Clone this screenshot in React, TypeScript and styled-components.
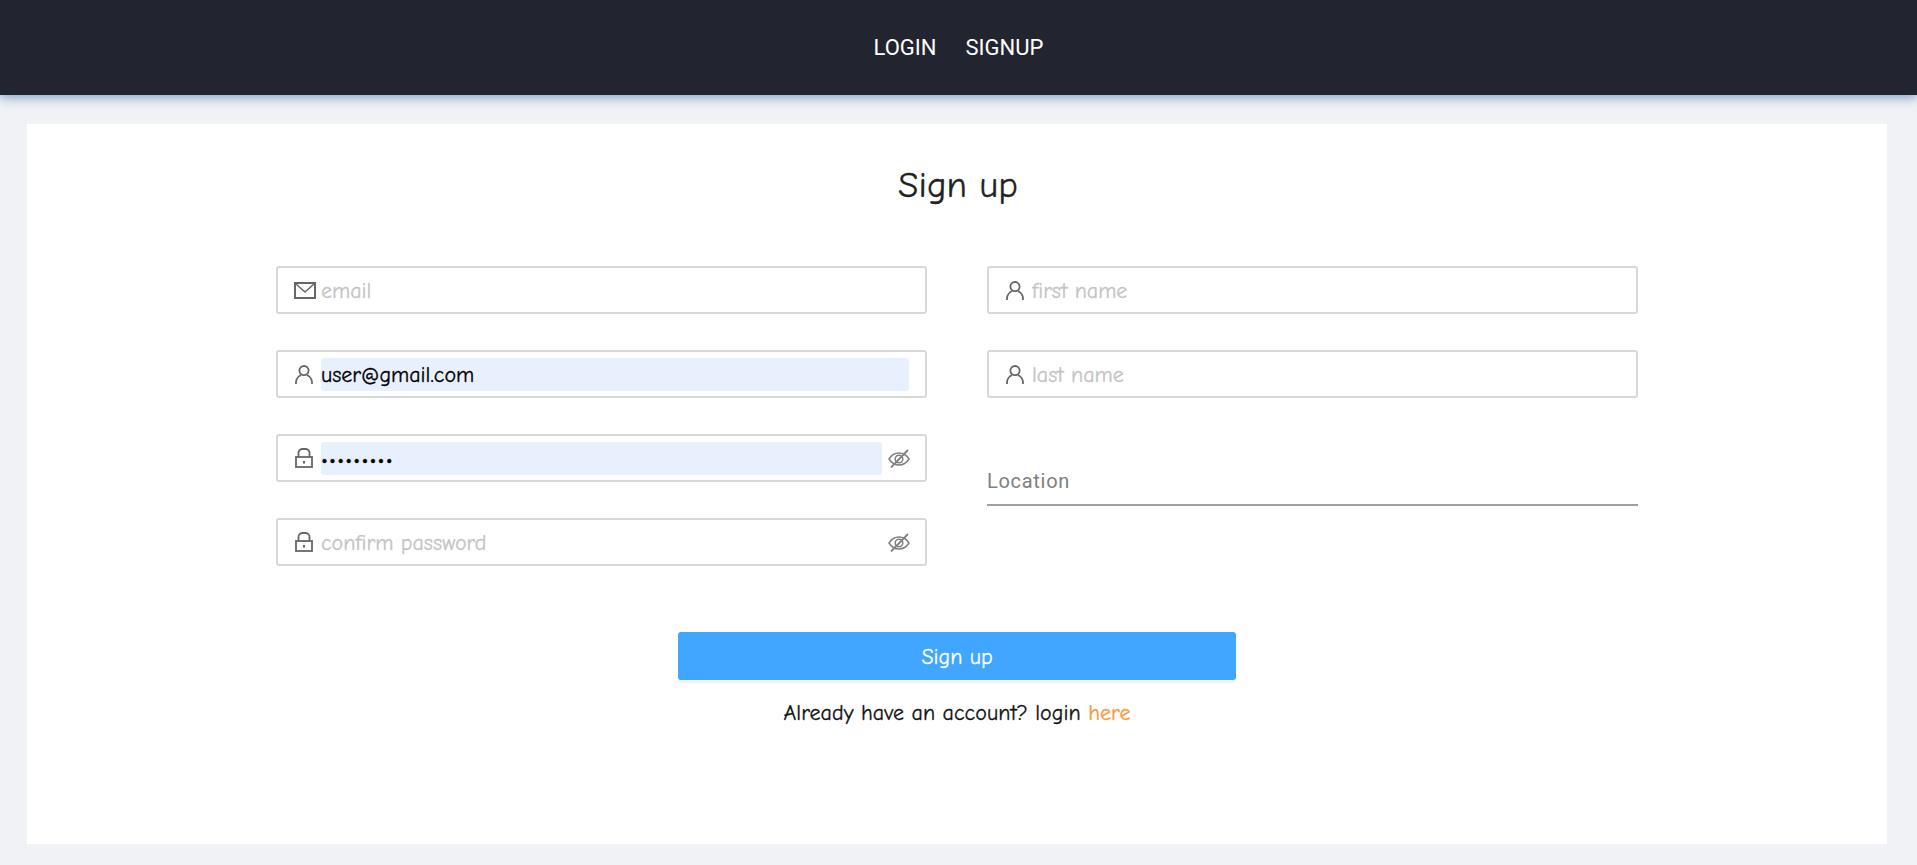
import styled, { createGlobalStyle } from "styled-components";

const comic = `"Comic Sans MS", "Comic Neue", cursive`;

const GlobalStyle = createGlobalStyle`
  * {
    box-sizing: border-box;
  }
  html, body {
    margin: 0;
    padding: 0;
    background: #f0f2f6;
    font-family: ${comic};
    -webkit-text-stroke: 0.3px;
  }
`;

const Page = styled.div`
  height: 865px;
  overflow: hidden;
  display: flex;
  flex-direction: column;
`;

const Header = styled.header`
  height: 95px;
  flex: none;
  background: #222530;
  box-shadow: 0 3px 10px rgba(90, 130, 175, 0.7);
  display: flex;
  justify-content: center;
  align-items: center;
  gap: 29px;
`;

const NavLink = styled.a`
  font-family: Roboto, sans-serif;
  font-size: 22px;
  color: #fff;
  text-transform: uppercase;
  -webkit-text-stroke: 0;
  cursor: pointer;
`;

const Card = styled.main`
  margin: 29px 30px 0 27px;
  height: 720px;
  background: #fff;
  display: flex;
  flex-direction: column;
  align-items: center;
  padding-top: 36px;
`;

const Title = styled.h1`
  margin: 0 0 0 2px;
  font-size: 37px;
  font-weight: 400;
  line-height: 50px;
  color: #222;
`;

const Form = styled.form`
  width: 1362px;
  margin-top: 56px;
  display: flex;
  flex-direction: column;
  align-items: center;
`;

const Columns = styled.div`
  width: 100%;
  display: grid;
  grid-template-columns: 651px 651px;
  column-gap: 60px;
`;

const Column = styled.div`
  display: flex;
  flex-direction: column;
  gap: 36px;
`;

const Field = styled.label`
  height: 48px;
  border: 2px solid #d8d8d8;
  border-radius: 3px;
  background: #fff;
  display: flex;
  align-items: center;
  padding: 0 16px;
`;

const IconSlot = styled.span<{ $inset?: number }>`
  width: 27px;
  flex: none;
  display: flex;
  align-items: center;
  padding-left: ${(p) => p.$inset ?? 0}px;
  color: #666;
  svg {
    display: block;
  }
`;

const Input = styled.input<{ $filled?: boolean; $dots?: boolean }>`
  flex: 1;
  min-width: 0;
  height: 33px;
  border: none;
  outline: none;
  padding: 2px 0 0;
  border-radius: 3px;
  font-family: ${comic};
  font-size: 22px;
  letter-spacing: ${(p) => (p.$dots ? "1.2px" : "normal")};
  color: #000;
  background: ${(p) => (p.$filled ? "#e8f0fe" : "transparent")};
  &::placeholder {
    color: #c4c4c4;
    opacity: 1;
  }
`;

const EyeSlot = styled.span`
  flex: none;
  width: 28px;
  margin-right: -1px;
  display: flex;
  justify-content: flex-end;
  color: #808080;
`;

const LocationField = styled.div`
  height: 50px;
  margin-top: 22px;
  border-bottom: 2px solid #a0a0a0;
`;

const LocationInput = styled.input`
  width: 100%;
  height: 100%;
  border: none;
  outline: none;
  padding: 1px 0 0;
  font-family: Roboto, sans-serif;
  font-size: 20px;
  letter-spacing: 0.7px;
  -webkit-text-stroke: 0;
  background: transparent;
  &::placeholder {
    color: #808080;
    opacity: 1;
  }
`;

const Submit = styled.button`
  width: 558px;
  height: 48px;
  margin-top: 66px;
  padding: 2px 0 0;
  border: none;
  border-radius: 3px;
  background: #40a6ff;
  color: #fff;
  font-family: ${comic};
  font-size: 22px;
  box-shadow: 0 3px 0 #f2f2f2;
  cursor: pointer;
`;

const Footnote = styled.p`
  margin: 19px 0 0;
  font-size: 22px;
  letter-spacing: 0.05px;
  line-height: 28px;
  color: #111;
`;

const Here = styled.a`
  color: #f59a3c;
  cursor: pointer;
`;

function MailIcon() {
  return (
    <svg width="22" height="17" viewBox="0 0 22 17" fill="none" stroke="currentColor">
      <rect x="1" y="1" width="20" height="15" strokeWidth="2" />
      <path d="M2 2l9 8 9-8" strokeWidth="1.5" />
    </svg>
  );
}

function UserIcon() {
  return (
    <svg width="18" height="19" viewBox="0 0 18 19" fill="none" stroke="currentColor" strokeWidth="1.8">
      <circle cx="9" cy="5.6" r="4.6" />
      <path d="M1 19v-1.500c0-3.600 2.800-6.500 5-7.400M17 19v-1.500c0-3.600-2.800-6.500-5-7.400" />
    </svg>
  );
}

function LockIcon() {
  return (
    <svg width="18" height="20" viewBox="0 0 18 20" fill="none" stroke="currentColor" strokeWidth="1.8">
      <rect x="1" y="9" width="16" height="10" />
      <path d="M3.500 9V5a4 4 0 0 1 4-4h3a4 4 0 0 1 4 4v4" />
      <rect x="8" y="13" width="2" height="2.500" fill="currentColor" stroke="none" />
    </svg>
  );
}

function EyeOffIcon() {
  return (
    <svg width="22" height="19" viewBox="0 0 22 19" fill="none" stroke="currentColor" strokeWidth="1.5">
      <path d="M1 10c2.500-4 6-6 10-6s7.500 2 10 6c-2.500 4-6 6-10 6S3.500 14 1 10z" />
      <circle cx="11" cy="10" r="3.800" />
      <path d="M3 18.500L20 1" strokeWidth="1.800" />
    </svg>
  );
}

export default function App() {
  return (
    <Page>
      <GlobalStyle />
      <Header>
        <NavLink>Login</NavLink>
        <NavLink>Signup</NavLink>
      </Header>
      <Card>
        <Title>Sign up</Title>
        <Form onSubmit={(e) => e.preventDefault()}>
          <Columns>
            <Column>
              <Field>
                <IconSlot><MailIcon /></IconSlot>
                <Input placeholder="email" />
              </Field>
              <Field>
                <IconSlot $inset={1}><UserIcon /></IconSlot>
                <Input $filled defaultValue="user@gmail.com" />
              </Field>
              <Field>
                <IconSlot $inset={1}><LockIcon /></IconSlot>
                <Input $filled $dots type="password" defaultValue="123456789" />
                <EyeSlot><EyeOffIcon /></EyeSlot>
              </Field>
              <Field>
                <IconSlot $inset={1}><LockIcon /></IconSlot>
                <Input type="password" placeholder="confirm password" />
                <EyeSlot><EyeOffIcon /></EyeSlot>
              </Field>
            </Column>
            <Column>
              <Field>
                <IconSlot $inset={1}><UserIcon /></IconSlot>
                <Input placeholder="first name" />
              </Field>
              <Field>
                <IconSlot $inset={1}><UserIcon /></IconSlot>
                <Input placeholder="last name" />
              </Field>
              <LocationField>
                <LocationInput placeholder="Location" />
              </LocationField>
            </Column>
          </Columns>
          <Submit type="submit">Sign up</Submit>
          <Footnote>
            Already have an account? login <Here>here</Here>
          </Footnote>
        </Form>
      </Card>
    </Page>
  );
}
